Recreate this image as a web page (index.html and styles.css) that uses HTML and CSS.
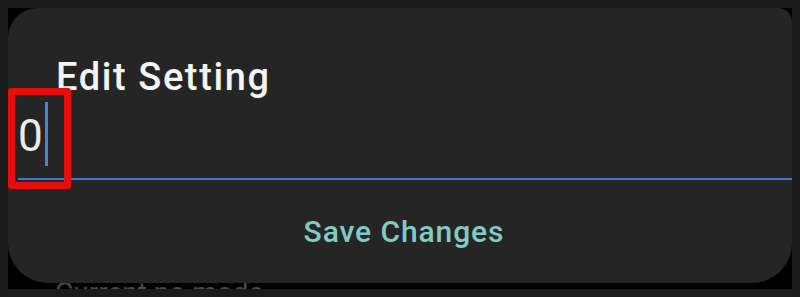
FILE: index.html
```html
<!DOCTYPE html>
<html lang="en">
<head>
<meta charset="utf-8">
<title>Edit Setting</title>
<link rel="stylesheet" href="styles.css">
</head>
<body>
<div class="frame">
  <div class="card">
    <h1 class="title">Edit Setting</h1>
    <div class="field">
      <span class="value">0</span><span class="caret"></span>
    </div>
    <div class="actions">
      <button class="save" type="button">Save Changes</button>
    </div>
    <div class="highlight"></div>
  </div>
  <div class="peek">Current no mode</div>
</div>
</body>
</html>
```

FILE: styles.css
```css
html, body {
  margin: 0;
  padding: 0;
}
body {
  background: #1b1b1b;
  width: 800px;
  height: 297px;
  overflow: hidden;
  font-family: Roboto, "Liberation Sans", sans-serif;
}
.frame {
  margin: 8px 0 0 8px;
  width: 784px;
  height: 281px;
  background: #000;
  overflow: hidden;
  display: flex;
  flex-direction: column;
}
.card {
  position: relative;
  z-index: 1;
  flex: none;
  height: 275px;
  background: #252525;
  border-radius: 30px 14px 40px 40px;
  display: flex;
  flex-direction: column;
}
.title {
  margin: 47px 0 0 48px;
  font-size: 38px;
  line-height: 44px;
  font-weight: 500;
  letter-spacing: 1.6px;
  color: #f4f4f4;
}
.field {
  margin: 9px 0 0 10px;
  height: 56px;
  padding-bottom: 14px;
  border-bottom: 2px solid #3b79cf;
  display: flex;
  align-items: center;
}
.value {
  font-size: 44px;
  line-height: 56px;
  color: #ececec;
}
.caret {
  width: 3px;
  height: 64px;
  margin: -6px 0 -2px 2px;
  background: #4a82d6;
}
.actions {
  margin-top: 34px;
  display: flex;
  justify-content: center;
  padding-left: 8px;
}
.save {
  background: none;
  border: 0;
  padding: 0;
  font-family: Roboto, "Liberation Sans", sans-serif;
  font-size: 30px;
  line-height: 36px;
  font-weight: 500;
  letter-spacing: 0.9px;
  color: #80cbc2;
}
.highlight {
  position: absolute;
  left: 0;
  top: 80px;
  width: 49px;
  height: 87px;
  border: 7px solid #e60d0d;
  border-radius: 3px;
}
.peek {
  flex: none;
  height: 6px;
  overflow: hidden;
  padding-left: 47px;
  font-size: 28px;
  line-height: 20px;
  color: #4a4a4a;
  white-space: nowrap;
}
```
